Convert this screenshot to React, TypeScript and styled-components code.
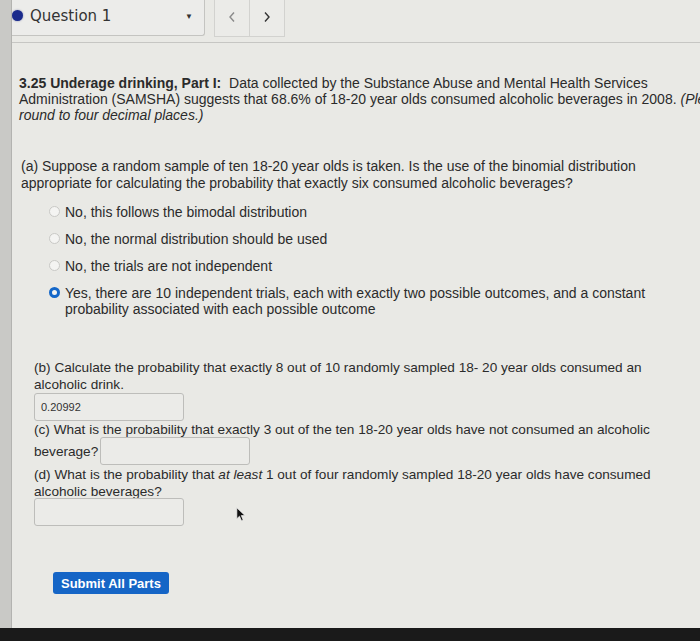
import { FC } from "react";
import styled, { createGlobalStyle } from "styled-components";

const GlobalStyle = createGlobalStyle`
  html, body {
    margin: 0;
    padding: 0;
    background: #1a1a1a;
  }

  body {
    font-family: "Liberation Sans", Arial, sans-serif;
    color: #2b2b2b;
  }
`;

const options = [
  ["No, this follows the bimodal distribution"],
  ["No, the normal distribution should be used"],
  ["No, the trials are not independent"],
  [
    "Yes, there are 10 independent trials, each with exactly two possible outcomes, and a constant",
    "probability associated with each possible outcome",
  ],
];

const App: FC = () => {
  return (
    <>
      <GlobalStyle />
      <Screen>
        <Page>
          <LeftEdge />
          <Main>
            <Header>
              <QuestionSelect>
                <StatusDot />
                <SelectLabel>Question 1</SelectLabel>
                <Caret>▼</Caret>
              </QuestionSelect>
              <NavGroup>
                <NavButton>
                  <Chevron dir="left" />
                </NavButton>
                <NavButton>
                  <Chevron dir="right" />
                </NavButton>
              </NavGroup>
            </Header>
            <Divider />

            <Content>
              <Intro>
                <b>3.25 Underage drinking, Part I:</b>&nbsp; Data collected by
                the Substance Abuse and Mental Health Services
                <br />
                Administration (SAMSHA) suggests that 68.6% of 18-20 year olds
                consumed alcoholic beverages in 2008. <i>(Please</i>
                <br />
                <i>round to four decimal places.)</i>
              </Intro>

              <Prompt>
                (a) Suppose a random sample of ten 18-20 year olds is taken. Is
                the use of the binomial distribution
                <br />
                appropriate for calculating the probability that exactly six
                consumed alcoholic beverages?
              </Prompt>

              <Options>
                {options.map((lines, i) => (
                  <Option key={lines[0]}>
                    <Radio $checked={i === 3} />
                    <OptionText>
                      {lines.map((line, j) => (
                        <span key={line}>
                          {j > 0 && <br />}
                          {line}
                        </span>
                      ))}
                    </OptionText>
                  </Option>
                ))}
              </Options>

              <Parts>
                <PartText>
                  (b) Calculate the probability that exactly 8 out of 10
                  randomly sampled 18- 20 year olds consumed an
                  <br />
                  alcoholic drink.
                </PartText>
                <AnswerBox>0.20992</AnswerBox>

                <PartText>
                  (c) What is the probability that exactly 3 out of the ten
                  18-20 year olds have not consumed an alcoholic
                </PartText>
                <InlineRow $top={-1}>
                  <PartText>beverage?</PartText>
                  <AnswerBox />
                </InlineRow>

                <PartText $top={1}>
                  (d) What is the probability that <i>at least</i> 1 out of
                  four randomly sampled 18-20 year olds have consumed
                  <br />
                  alcoholic beverages?
                </PartText>
                <InlineRow $top={-2}>
                  <AnswerBox />
                  <Pointer viewBox="0 0 12 18">
                    <path
                      d="M1 1 L1 14 L4.2 11 L6.6 16.5 L8.6 15.6 L6.3 10.3 L10.6 10.1 Z"
                      fill="#111"
                      stroke="#f2f2f2"
                      strokeWidth="0.8"
                    />
                  </Pointer>
                </InlineRow>
              </Parts>

              <SubmitButton>Submit All Parts</SubmitButton>
            </Content>
          </Main>
        </Page>
      </Screen>
    </>
  );
};

const Screen = styled.div`
  width: 700px;
  height: 641px;
  overflow: hidden;
  display: flex;
  flex-direction: column;
`;

const Page = styled.div`
  height: 628px;
  flex: none;
  display: flex;
  background: #e9e9e5;
`;

const LeftEdge = styled.div`
  width: 11px;
  flex: none;
  background: #c9c9c6;
  border-right: 1px solid #b3b3b0;
`;

const Main = styled.div`
  flex: 1;
  display: flex;
  flex-direction: column;
  min-width: 0;
  overflow: hidden;
`;

const Header = styled.div`
  height: 36px;
  flex: none;
  display: flex;
  align-items: stretch;
  gap: 9px;
`;

const QuestionSelect = styled.div`
  width: 192px;
  display: flex;
  align-items: center;
  border-right: 1px solid #c4c4c1;
  border-bottom: 1px solid #c4c4c1;
  border-bottom-right-radius: 3px;
  background: #ececea;
`;

const StatusDot = styled.span`
  width: 11px;
  height: 11px;
  border-radius: 50%;
  background: #1a2a8c;
  margin-right: 7px;
  margin-top: -4px;
  box-shadow: 0 0 2px rgba(20, 30, 120, 0.5);
`;

const SelectLabel = styled.span`
  font-family: "DejaVu Sans", sans-serif;
  font-size: 15px;
  color: #333;
  margin-top: -4px;
  flex: 1;
`;

const Caret = styled.span`
  font-size: 8px;
  color: #333;
  margin-right: 11px;
  margin-top: -2px;
`;

const NavGroup = styled.div`
  display: flex;
  height: 37px;
`;

const NavButton = styled.div`
  width: 34px;
  display: flex;
  align-items: center;
  justify-content: center;
  border: 1px solid #d2d2cf;
  border-top: none;
  background: #ebebe8;

  & + & {
    border-left: none;
  }
`;

const Chevron: FC<{ dir: "left" | "right" }> = ({ dir }) => (
  <ChevronSvg viewBox="0 0 8 12" $light={dir === "left"}>
    <path
      d={dir === "left" ? "M6 1.5 L2 6 L6 10.5" : "M2 1.5 L6 6 L2 10.5"}
      fill="none"
      stroke="currentColor"
      strokeWidth="1.4"
    />
  </ChevronSvg>
);

const ChevronSvg = styled.svg<{ $light: boolean }>`
  width: 8px;
  height: 12px;
  margin-top: -3px;
  color: ${({ $light }) => ($light ? "#8a8a8a" : "#333")};
`;

const Divider = styled.div`
  height: 1px;
  flex: none;
  background: #c6c6c3;
  margin-top: 6px;
`;

const Content = styled.div`
  padding: 32px 0 0 7px;
  font-size: 14px;
  line-height: 16px;
  white-space: nowrap;
`;

const Intro = styled.p`
  margin: 0;
`;

const Prompt = styled.p`
  margin: 35px 0 0 2px;
  line-height: 17px;
`;

const Options = styled.div`
  margin: 12px 0 0 30px;
  display: flex;
  flex-direction: column;
  gap: 11px;
`;

const Option = styled.label`
  display: flex;
  align-items: flex-start;
  gap: 5px;
`;

const Radio = styled.span<{ $checked: boolean }>`
  flex: none;
  box-sizing: border-box;
  width: 11px;
  height: 11px;
  margin-top: 2px;
  border-radius: 50%;
  background: #f4f4f2;
  border: ${({ $checked }) =>
    $checked ? "3px solid #1467c9" : "1px solid #c9c9c6"};
`;

const OptionText = styled.span`
  line-height: 16px;
`;

const Parts = styled.div`
  margin: 42px 0 0 15px;
  display: flex;
  flex-direction: column;
  align-items: flex-start;
  font-size: 13.6px;
  line-height: 17px;
`;

const PartText = styled.p<{ $top?: number }>`
  margin: ${({ $top = 0 }) => $top}px 0 0;
`;

const InlineRow = styled.div<{ $top?: number }>`
  display: flex;
  align-items: center;
  gap: 2px;
  margin-top: ${({ $top = 0 }) => $top}px;
`;

const AnswerBox = styled.div`
  box-sizing: border-box;
  width: 150px;
  height: 28px;
  display: flex;
  align-items: center;
  padding-left: 6px;
  font-size: 11px;
  color: #333;
  background: #ebebe8;
  border: 1px solid #bdbdba;
  border-radius: 3px;
`;

const Pointer = styled.svg`
  width: 10px;
  height: 15px;
  margin-left: 50px;
  margin-top: 4px;
`;

const SubmitButton = styled.button`
  margin: 46px 0 0 34px;
  padding: 0 8px;
  height: 22px;
  border: none;
  border-radius: 3px;
  background: #1565c6;
  color: #fff;
  font-family: "Liberation Sans", Arial, sans-serif;
  font-size: 13px;
  font-weight: bold;
`;

export default App;
